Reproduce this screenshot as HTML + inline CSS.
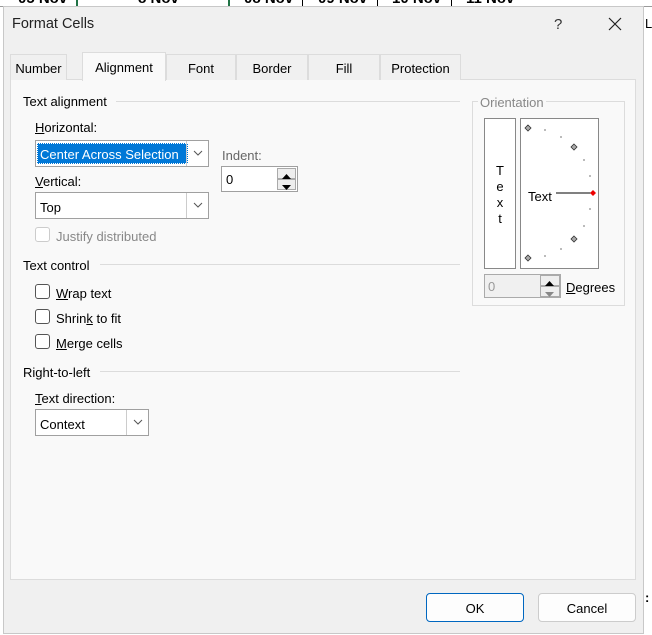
<!DOCTYPE html>
<html><head><style>
*{box-sizing:border-box;margin:0;padding:0}
body{width:652px;height:635px;overflow:hidden;background:#fff;font-family:"Liberation Sans",sans-serif;font-size:13px;color:#000;position:relative}
.a{position:absolute}
.u{text-decoration:underline}
.dlg{left:3px;top:6px;width:641px;height:628px;background:#f0f0f0;border:1px solid #c8c8c8}
.panel{left:10px;top:79px;width:626px;height:501px;background:#f9f9f9;border:1px solid #dcdcdc}
.tab{top:54px;height:26px;border:1px solid #dcdcdc;border-bottom:none;background:#f0f0f0;text-align:center;line-height:28px}
.hr{height:1px;background:#dcdcdc}
.combo{background:#fff;border:1px solid #a0a0a0;height:27px}
.cb{width:15px;height:15px;border:1px solid #555;border-radius:3px;background:#fff}
.chev{position:absolute;right:0;top:0;width:22px;height:25px;border-left:1px solid #ccc}
.btn{top:593px;height:29px;border-radius:4px;text-align:center;line-height:29px;background:#fdfdfd}
</style></head><body>
<div class="a" style="left:0;top:0;width:652px;height:7px;overflow:hidden;border-bottom:1px solid #999">
<div class="a" style="left:18px;top:-10px;font-weight:bold;font-size:15px">05 Nov</div>
<div class="a" style="left:76px;top:0;width:2px;height:8px;background:#217346"></div>
<div class="a" style="left:138px;top:-10px;font-weight:bold;font-size:15px">8 Nov</div>
<div class="a" style="left:228px;top:0;width:2px;height:8px;background:#217346"></div>
<div class="a" style="left:244px;top:-10px;font-weight:bold;font-size:15px">08 Nov</div>
<div class="a" style="left:302px;top:0;width:1px;height:8px;background:#000"></div>
<div class="a" style="left:318px;top:-10px;font-weight:bold;font-size:15px">09 Nov</div>
<div class="a" style="left:377px;top:0;width:1px;height:8px;background:#000"></div>
<div class="a" style="left:392px;top:-10px;font-weight:bold;font-size:15px">10 Nov</div>
<div class="a" style="left:451px;top:0;width:1px;height:8px;background:#000"></div>
<div class="a" style="left:466px;top:-10px;font-weight:bold;font-size:15px">11 Nov</div>
</div>
<div class="a" style="left:645px;top:16px;font-size:13px">L</div>
<div class="a" style="left:645px;top:590px;font-weight:bold">:</div>

<div class="a dlg"></div>
<div class="a" style="left:12px;top:16px;font-size:14.5px;color:#222">Format Cells</div>
<div class="a" style="left:554px;top:16px;font-size:15px;color:#333">?</div>
<svg class="a" style="left:608px;top:17px" width="14" height="14"><path d="M1 1L13 13M13 1L1 13" stroke="#222" stroke-width="1.2"/></svg>

<div class="a panel"></div>
<div class="a tab" style="left:10px;width:57px">Number</div>
<div class="a tab" style="left:82px;width:84px;top:52px;height:29px;background:#f9f9f9;line-height:30px">Alignment</div>
<div class="a tab" style="left:166px;width:70px">Font</div>
<div class="a tab" style="left:236px;width:72px">Border</div>
<div class="a tab" style="left:308px;width:72px">Fill</div>
<div class="a tab" style="left:380px;width:81px">Protection</div>

<div class="a" style="left:23px;top:94px">Text alignment</div>
<div class="a hr" style="left:116px;top:101px;width:344px"></div>
<div class="a" style="left:35px;top:120px"><span class="u">H</span>orizontal:</div>
<div class="a combo" style="left:35px;top:140px;width:174px"><div class="a" style="left:1px;top:2px;width:151px;height:21px;background:#0078d7;color:#fff;padding-left:2px;line-height:22px;border:1px dotted #fff">Center Across Selection</div><div class="chev"><svg width="22" height="25"><path d="M7 10l4 4 4-4" stroke="#555" fill="none"/></svg></div></div>
<div class="a" style="left:222px;top:148px;color:#666">Indent:</div>
<div class="a combo" style="left:221px;top:166px;width:77px;height:26px"><div class="a" style="left:4px;top:5px">0</div>
<div class="a" style="left:55px;top:1px;width:19px;height:11px;border:1px solid #aaa;background:#eee"><svg width="17" height="9"><path d="M4 7h9l-4.5-5z" fill="#000"/></svg></div>
<div class="a" style="left:55px;top:12px;width:19px;height:11px;border:1px solid #aaa;background:#eee"><svg width="17" height="9"><path d="M4 2h9l-4.5 5z" fill="#000"/></svg></div></div>
<div class="a" style="left:35px;top:174px"><span class="u">V</span>ertical:</div>
<div class="a combo" style="left:35px;top:192px;width:174px"><div class="a" style="left:4px;top:7px">Top</div><div class="chev"><svg width="22" height="25"><path d="M7 10l4 4 4-4" stroke="#555" fill="none"/></svg></div></div>
<div class="a cb" style="left:35px;top:227px;border-color:#ccc"></div>
<div class="a" style="left:56px;top:229px;color:#888">Justify distributed</div>

<div class="a" style="left:23px;top:258px">Text control</div>
<div class="a hr" style="left:100px;top:264px;width:360px"></div>
<div class="a cb" style="left:35px;top:284px"></div><div class="a" style="left:56px;top:286px"><span class="u">W</span>rap text</div>
<div class="a cb" style="left:35px;top:309px"></div><div class="a" style="left:56px;top:311px">Shrin<span class="u">k</span> to fit</div>
<div class="a cb" style="left:35px;top:334px"></div><div class="a" style="left:56px;top:336px"><span class="u">M</span>erge cells</div>

<div class="a" style="left:23px;top:365px">Right-to-left</div>
<div class="a hr" style="left:100px;top:371px;width:360px"></div>
<div class="a" style="left:35px;top:391px"><span class="u">T</span>ext direction:</div>
<div class="a combo" style="left:35px;top:409px;width:114px"><div class="a" style="left:4px;top:7px">Context</div><div class="chev"><svg width="22" height="25"><path d="M7 10l4 4 4-4" stroke="#555" fill="none"/></svg></div></div>

<div class="a" style="left:472px;top:101px;width:153px;height:205px;border:1px solid #dcdcdc"></div>
<div class="a" style="left:478px;top:95px;color:#888;background:#f9f9f9;padding:0 2px">Orientation</div>
<div class="a" style="left:484px;top:118px;width:32px;height:151px;border:1px solid #888;background:#fff"></div>
<div class="a" style="left:495px;top:163px;line-height:16px;text-align:center;width:10px">T<br>e<br>x<br>t</div>
<div class="a" style="left:520px;top:118px;width:79px;height:151px;border:1px solid #888;background:#fff"></div>
<svg class="a" style="left:520px;top:118px" width="79" height="151">
<g fill="#bbb"><rect x="24" y="11" width="2" height="2"/><rect x="40" y="18" width="2" height="2"/><rect x="63" y="41" width="2" height="2"/><rect x="69" y="57" width="2" height="2"/><rect x="69" y="90" width="2" height="2"/><rect x="63" y="107" width="2" height="2"/><rect x="40" y="130" width="2" height="2"/><rect x="24" y="137" width="2" height="2"/></g>
<g fill="#aaa" stroke="#333" stroke-width=".8"><path d="M8 7l3 3-3 3-3-3z"/><path d="M54 26l3 3-3 3-3-3z"/><path d="M54 118l3 3-3 3-3-3z"/><path d="M8 137l3 3-3 3-3-3z"/></g>
<path d="M36 75h36" stroke="#000"/><path d="M73 72l3 3-3 3-3-3z" fill="#e00"/>
<text x="8" y="83" font-family="Liberation Sans" font-size="13">Text</text></svg>
<div class="a" style="left:484px;top:274px;width:77px;height:24px;border:1px solid #aaa;background:#f0f0f0"><div class="a" style="left:3px;top:4px;color:#999">0</div>
<div class="a" style="left:55px;top:0;width:20px;height:11px;border:1px solid #aaa;background:#eee"><svg width="18" height="9"><path d="M4 7h9l-4.5-5z" fill="#000"/></svg></div>
<div class="a" style="left:55px;top:11px;width:20px;height:11px;border:1px solid #aaa;background:#eee"><svg width="18" height="9"><path d="M4 2h9l-4.5 5z" fill="#888"/></svg></div></div>
<div class="a" style="left:566px;top:280px"><span class="u">D</span>egrees</div>

<div class="a btn" style="left:426px;width:98px;border:1px solid #0067c0">OK</div>
<div class="a btn" style="left:538px;width:98px;border:1px solid #ccc">Cancel</div>
</body></html>
